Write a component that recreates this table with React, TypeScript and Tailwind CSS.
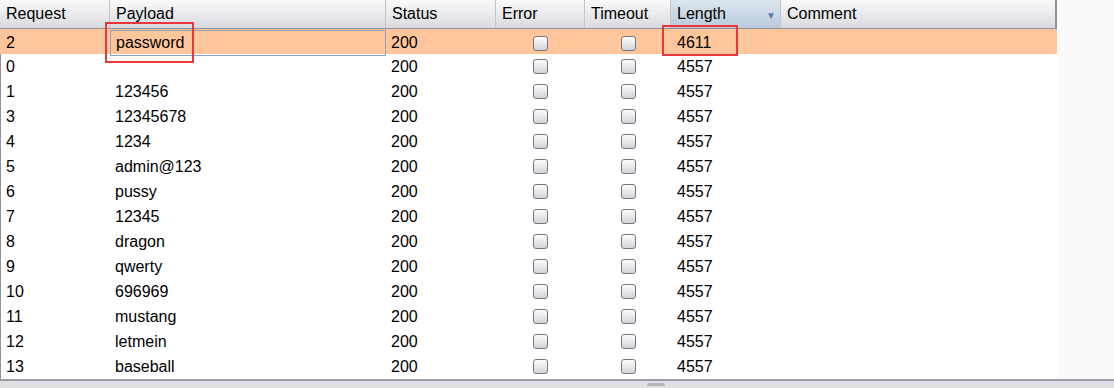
import React from "react";

const cols = "grid grid-cols-[110px_276px_110px_89px_86px_110px_276px]";

const rows: { req: number; payload: string; len: number }[] = [
  { req: 2, payload: "password", len: 4611 },
  { req: 0, payload: "", len: 4557 },
  { req: 1, payload: "123456", len: 4557 },
  { req: 3, payload: "12345678", len: 4557 },
  { req: 4, payload: "1234", len: 4557 },
  { req: 5, payload: "admin@123", len: 4557 },
  { req: 6, payload: "pussy", len: 4557 },
  { req: 7, payload: "12345", len: 4557 },
  { req: 8, payload: "dragon", len: 4557 },
  { req: 9, payload: "qwerty", len: 4557 },
  { req: 10, payload: "696969", len: 4557 },
  { req: 11, payload: "mustang", len: 4557 },
  { req: 12, payload: "letmein", len: 4557 },
  { req: 13, payload: "baseball", len: 4557 },
];

function Box() {
  return (
    <span className="block w-[15px] h-[15px] rounded-[3px] border border-[#74767e] bg-gradient-to-b from-[#fdfdfd] to-[#d2d4da]" />
  );
}

function HeadCell({ label, sorted }: { label: string; sorted?: boolean }) {
  return (
    <div
      className={`relative flex items-center pl-[6px] border-r border-[#c3c5cc] ${
        sorted
          ? "bg-gradient-to-b from-[#dde6ef] to-[#b9cadb]"
          : "bg-gradient-to-b from-[#fafafb] to-[#d9dadf]"
      }`}
    >
      {label}
      {sorted && (
        <span className="absolute right-[4px] top-[8px] text-[10px] text-[#5d80a8]">▼</span>
      )}
    </div>
  );
}

export default function App() {
  return (
    <div
      className="relative w-[1114px] h-[388px] overflow-hidden bg-[#fafafa] text-[16px] text-black flex flex-col"
      style={{ fontFamily: '"Liberation Sans", Arial, sans-serif' }}
    >
      <div className="flex h-[379px]">
        <div className="w-[1057px] flex flex-col bg-white border-l border-[#8e909a]">
          <div className={`${cols} h-[29px] border-b border-[#8e909a] -ml-px`}>
            <HeadCell label="Request" />
            <HeadCell label="Payload" />
            <HeadCell label="Status" />
            <HeadCell label="Error" />
            <HeadCell label="Timeout" />
            <HeadCell label="Length" sorted />
            <div className="flex items-center pl-[6px] border-r-2 border-[#8e909a] bg-gradient-to-b from-[#fafafb] to-[#d9dadf]">
              Comment
            </div>
          </div>
          {rows.map((r, i) => (
            <div
              key={r.req}
              className={`${cols} h-[25px] -ml-px ${i === 0 ? "bg-[#ffc69b]" : ""}`}
            >
              <div className="flex items-center pl-[6px]">{r.req}</div>
              <div
                className={`flex items-center pl-[5px] ${
                  i === 0 ? "border border-[#8da2bb] my-px" : ""
                }`}
              >
                {r.payload}
              </div>
              <div className="flex items-center pl-[5px]">200</div>
              <div className="flex items-center justify-center">
                <Box />
              </div>
              <div className="flex items-center justify-center">
                <Box />
              </div>
              <div className="flex items-center pl-[6px]">{r.len}</div>
              <div />
            </div>
          ))}
        </div>
        <div className="flex-1" />
      </div>
      <div className="flex-1 border-t-2 border-[#9b9da6] bg-[#dfe0e5] pl-[647px]">
        <span className="block mt-[2px] w-[18px] h-[3px] rounded-sm bg-[#b4b6be]" />
      </div>

      <div className="absolute left-[105px] top-[22px] w-[89px] h-[41px] border-2 border-[#e8383b]" />
      <div className="absolute left-[662px] top-[25px] w-[76px] h-[31px] border-2 border-[#e8383b]" />
    </div>
  );
}
